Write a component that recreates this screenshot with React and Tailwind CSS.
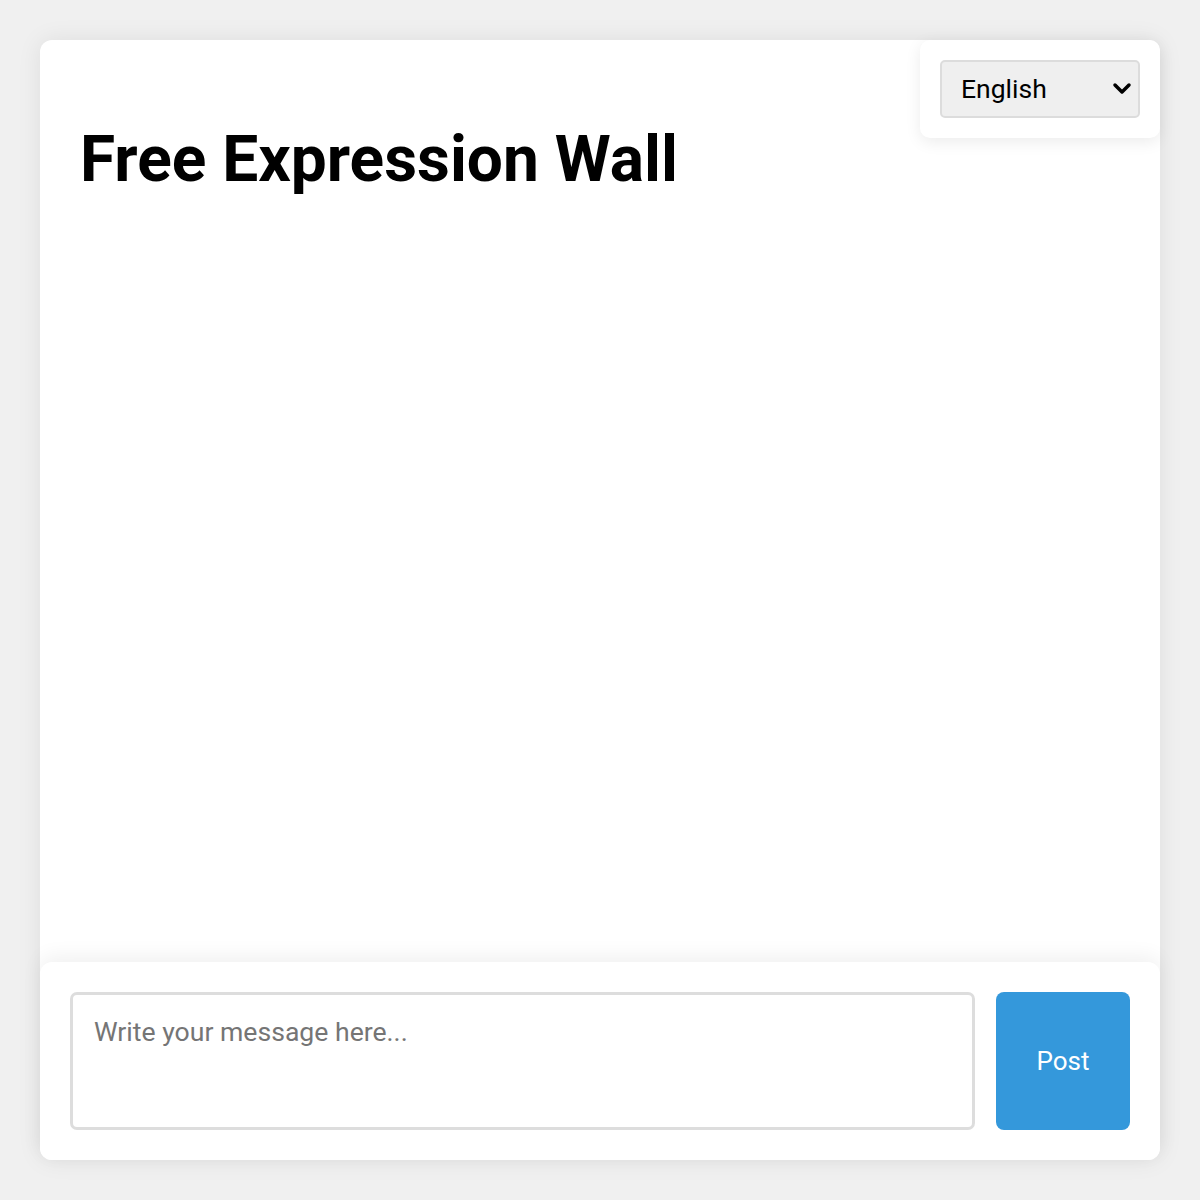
import React from "react";

export default function App() {
  return (
    <div
      className="min-h-screen w-full bg-[#f0f0f0] p-10"
      style={{ fontFamily: "Roboto, 'Noto Sans', sans-serif" }}
    >
      <div className="relative flex h-[1120px] flex-col rounded-[12px] bg-white shadow-[0_0_24px_rgba(0,0,0,0.08)]">
        {/* language picker */}
        <div className="absolute right-0 top-0 rounded-[10px] bg-white p-5 shadow-[0_4px_16px_rgba(0,0,0,0.08)]">
          <div className="relative">
            <select
              className="h-[58px] w-[200px] appearance-none rounded-[5px] border-2 border-[#dcdcdc] bg-[#efefef] pl-[19px] text-[26.5px] text-black outline-none"
              defaultValue="en"
            >
              <option value="en">English</option>
            </select>
            <svg
              className="pointer-events-none absolute right-[8px] top-1/2 -translate-y-1/2"
              width="20"
              height="14"
              viewBox="0 0 20 14"
            >
              <path d="M3 3 L10 10 L17 3" fill="none" stroke="black" strokeWidth="3.5" strokeLinecap="round" strokeLinejoin="round" />
            </svg>
          </div>
        </div>

        <h1 className="px-10 pt-[88px] text-[64px] font-bold leading-none text-black">
          Free Expression Wall
        </h1>

        <div className="flex-1" />

        {/* composer */}
        <div className="flex gap-[21px] rounded-[12px] bg-white p-[30px] shadow-[0_-6px_20px_rgba(0,0,0,0.06)]">
          <textarea
            placeholder="Write your message here..."
            className="h-[138px] flex-1 resize-none rounded-[7px] border-[3px] border-[#dddddd] px-[21px] pb-[20px] pt-[17px] text-[26.6px] text-black outline-none placeholder:text-[#757575]"
          />
          <button className="h-[138px] w-[134px] rounded-[8px] bg-[#3498db] text-[26px] text-white">
            Post
          </button>
        </div>
      </div>
    </div>
  );
}
